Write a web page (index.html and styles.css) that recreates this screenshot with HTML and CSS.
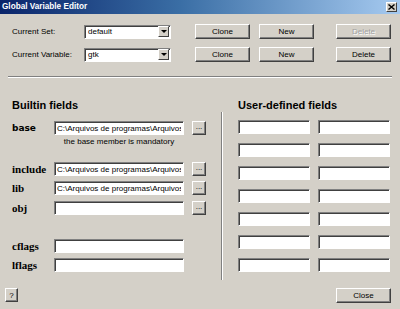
FILE: index.html
```html
<!DOCTYPE html>
<html>
<head>
<meta charset="utf-8">
<title>Global Variable Editor</title>
<link rel="stylesheet" href="styles.css">
</head>
<body>
<div class="window">
  <div class="titlebar">
    <span class="title">Global Variable Editor</span>
    <span class="close-x">
      <svg width="7" height="6" viewBox="0 0 7 6"><path d="M0.5 0.5 L6.5 5.5 M6.5 0.5 L0.5 5.5" stroke="#000" stroke-width="1.4" fill="none"/></svg>
    </span>
  </div>

  <div class="top">
    <span class="lbl">Current Set:</span>
    <div class="combo"><span class="combo-text">default</span><span class="drop"><i class="tri"></i></span></div>
    <button class="btn c-clone">Clone</button>
    <button class="btn c-new">New</button>
    <button class="btn c-del disabled">Delete</button>

    <span class="lbl">Current Variable:</span>
    <div class="combo"><span class="combo-text">gtk</span><span class="drop"><i class="tri"></i></span></div>
    <button class="btn c-clone">Clone</button>
    <button class="btn c-new">New</button>
    <button class="btn c-del">Delete</button>
  </div>

  <div class="hsep"></div>

  <div class="main">
    <div class="builtin">
      <div class="heading">Builtin fields</div>
      <div class="row first">
        <span class="flabel base">base</span>
        <input class="field" type="text" value="C:\Arquivos de programas\Arquivos" readonly>
        <button class="dots">...</button>
      </div>
      <div class="note">the base member is mandatory</div>
      <div class="row after-note">
        <span class="flabel">include</span>
        <input class="field" type="text" value="C:\Arquivos de programas\Arquivos" readonly>
        <button class="dots">...</button>
      </div>
      <div class="row">
        <span class="flabel">lib</span>
        <input class="field" type="text" value="C:\Arquivos de programas\Arquivos" readonly>
        <button class="dots">...</button>
      </div>
      <div class="row obj">
        <span class="flabel">obj</span>
        <input class="field" type="text" value="" readonly>
        <button class="dots">...</button>
      </div>
      <div class="row flags">
        <span class="flabel">cflags</span>
        <input class="field" type="text" value="" readonly>
      </div>
      <div class="row">
        <span class="flabel">lflags</span>
        <input class="field" type="text" value="" readonly>
      </div>
    </div>

    <div class="vsep"></div>

    <div class="userdef">
      <div class="heading">User-defined fields</div>
      <div class="ugrid">
        <input class="ufield" type="text"><input class="ufield" type="text">
        <input class="ufield" type="text"><input class="ufield" type="text">
        <input class="ufield" type="text"><input class="ufield" type="text">
        <input class="ufield" type="text"><input class="ufield" type="text">
        <input class="ufield" type="text"><input class="ufield" type="text">
        <input class="ufield" type="text"><input class="ufield" type="text">
        <input class="ufield" type="text"><input class="ufield" type="text">
      </div>
    </div>
  </div>

  <div class="bottom">
    <button class="btn help">?</button>
    <button class="btn close">Close</button>
  </div>
</div>
</body>
</html>
```

FILE: styles.css
```css
* { box-sizing: border-box; }

body {
  margin: 0;
  font-family: "Liberation Sans", Arial, sans-serif;
  font-size: 8px;
  color: #000;
  background: #d4d0c8;
}

.window {
  width: 400px;
  height: 309px;
  background: #d4d0c8;
  display: flex;
  flex-direction: column;
  overflow: hidden;
}

.titlebar {
  height: 14px;
  flex: none;
  background: linear-gradient(to right, #0a246a 0%, #3a6ea5 45%, #a6caf0 100%);
  display: flex;
  align-items: center;
  justify-content: space-between;
  padding: 0 3px 0 2px;
}

.title {
  color: #fff;
  font-weight: bold;
  font-size: 8.2px;
  line-height: 14px;
}

.close-x {
  width: 11px;
  height: 10px;
  background: #d4d0c8;
  border: 1px solid;
  border-color: #fff #404040 #404040 #fff;
  display: flex;
  align-items: center;
  justify-content: center;
}

.close-x svg { display: block; }

.top {
  flex: none;
  display: grid;
  grid-template-columns: 72px 87px 24px 55px 9px 55px 22px 55px;
  grid-template-rows: 15px 15px;
  row-gap: 8px;
  align-items: center;
  padding: 10px 0 0 12px;
}

.lbl { grid-column: 1; font-size: 8px; white-space: nowrap; }
.combo { grid-column: 2; }
.c-clone { grid-column: 4; }
.c-new { grid-column: 6; }
.c-del { grid-column: 8; }

.combo {
  height: 14px;
  background: #fff;
  border: 1px solid;
  border-color: #808080 #fff #fff #808080;
  box-shadow: inset 1px 1px 0 #404040;
  display: flex;
  align-items: center;
  padding: 1px 1px 1px 3px;
}

.combo-text {
  flex: 1;
  font-size: 8px;
  line-height: 10px;
}

.drop {
  width: 11px;
  height: 11px;
  background: #d4d0c8;
  border: 1px solid;
  border-color: #fff #404040 #404040 #fff;
  display: flex;
  align-items: center;
  justify-content: center;
}

.tri {
  display: block;
  width: 0;
  height: 0;
  border-left: 3px solid transparent;
  border-right: 3px solid transparent;
  border-top: 3px solid #000;
}

.btn {
  height: 15px;
  margin: 0;
  padding: 0;
  font-family: "Liberation Sans", Arial, sans-serif;
  font-size: 8px;
  color: #000;
  background: #d4d0c8;
  border: 1px solid;
  border-color: #fff #404040 #404040 #fff;
  box-shadow: inset -1px -1px 0 #808080;
  display: flex;
  align-items: center;
  justify-content: center;
}

.btn.disabled {
  color: #a0a0a0;
  text-shadow: 1px 1px 0 #fff;
}

.hsep {
  flex: none;
  margin: 14px 8px 0 8px;
  border-top: 1px solid #808080;
  border-bottom: 1px solid #fff;
}

.main {
  flex: 1;
  min-height: 0;
  display: flex;
  align-items: flex-start;
  padding: 21px 0 0 12px;
}

.heading {
  font-weight: bold;
  font-size: 11px;
  line-height: 13px;
  white-space: nowrap;
}

.builtin {
  width: 209px;
  display: flex;
  flex-direction: column;
}

.row {
  display: flex;
  align-items: center;
  height: 14px;
  margin-top: 5px;
}

.row.first { margin-top: 9px; }
.row.after-note { margin-top: 15px; }
.row.obj { margin-top: 6px; }
.row.flags { margin-top: 24px; }

.flabel {
  width: 42px;
  font-family: "Liberation Serif", "Times New Roman", serif;
  font-weight: bold;
  font-size: 11px;
  line-height: 14px;
}

.flabel.base {
  font-family: "DejaVu Sans", Verdana, sans-serif;
  font-size: 9px;
}

.field, .ufield {
  height: 14px;
  margin: 0;
  padding: 0 2px;
  background: #fff;
  border: 1px solid;
  border-color: #808080 #fff #fff #808080;
  box-shadow: inset 1px 1px 0 #404040;
  font-family: "Liberation Sans", Arial, sans-serif;
  font-size: 8px;
  color: #000;
  outline: none;
}

.field { width: 130px; }

.dots {
  width: 14px;
  height: 14px;
  margin: 0 0 0 8px;
  padding: 0 0 3px 0;
  background: #d4d0c8;
  border: 1px solid;
  border-color: #fff #404040 #404040 #fff;
  box-shadow: inset -1px -1px 0 #808080;
  font-family: "Liberation Sans", Arial, sans-serif;
  font-size: 8px;
  line-height: 8px;
  color: #000;
  display: flex;
  align-items: flex-end;
  justify-content: center;
}

.note {
  width: 172px;
  padding-left: 42px;
  text-align: center;
  font-size: 8px;
  line-height: 10px;
  margin-top: 2px;
}

.vsep {
  flex: none;
  width: 2px;
  height: 168px;
  margin-top: 13px;
  border-left: 1px solid #808080;
  border-right: 1px solid #fff;
}

.userdef {
  margin-left: 15px;
  display: flex;
  flex-direction: column;
}

.ugrid {
  margin-top: 8px;
  display: grid;
  grid-template-columns: 72px 72px;
  grid-auto-rows: 14px;
  column-gap: 8px;
  row-gap: 9px;
}

.ufield { width: 72px; }

.bottom {
  flex: none;
  display: flex;
  justify-content: space-between;
  align-items: flex-start;
  padding: 0 9px 6px 5px;
}

.help {
  width: 13px;
  height: 14px;
}

.close {
  width: 55px;
}
```
